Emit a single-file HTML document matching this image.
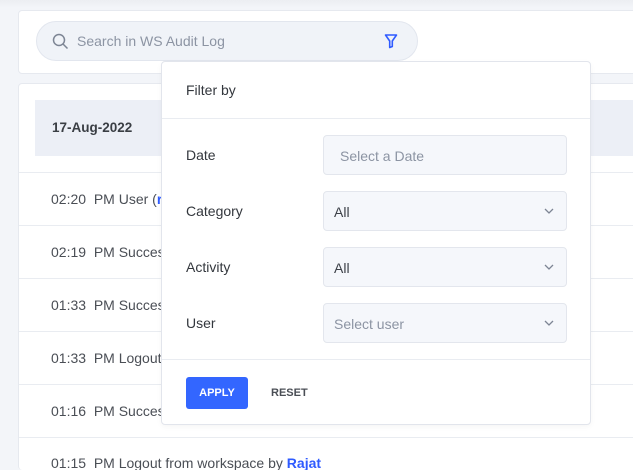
<!DOCTYPE html>
<html style="overflow:hidden;height:470px"><head><style>
*{box-sizing:border-box;margin:0;padding:0}
body{width:633px;height:470px;overflow:hidden;background:#f3f5f9;font-family:"Liberation Sans",sans-serif;position:relative;color:#3d4148}
.card{position:absolute;background:#fff;border:1px solid #e6e9ef;border-radius:4px}
.search{position:absolute;left:36px;top:21px;width:382px;height:40px;border-radius:20px;background:#f0f3f8;border:1px solid #e2e6ee}
.search span{position:absolute;left:40px;top:11px;font-size:14px;color:#8c94a3}
.hdr{position:absolute;left:35px;top:100px;width:600px;height:56px;background:#eceff6}
.hdr b{position:absolute;left:17px;top:20px;font-size:13.5px;color:#3a3e44}
.line{position:absolute;left:19px;width:614px;height:1px;background:#e9ecf1}
.row{position:absolute;left:51px;font-size:14px;color:#4a4e55;white-space:nowrap}
.row a{color:#2f5bff;font-weight:bold;text-decoration:none}
.pop{position:absolute;left:161px;top:61px;width:430px;height:364px;background:#fff;border:1px solid #e2e5ec;border-radius:4px;box-shadow:0 2px 6px rgba(0,0,0,.04)}
.pop .lbl{position:absolute;left:24px;font-size:14px;color:#33373d}
.inp{position:absolute;left:161px;width:244px;height:40px;background:#f5f7fb;border:1px solid #e3e6ed;border-radius:4px;font-size:14px}
.inp span{position:absolute;left:16px;top:12px}
.inp svg{position:absolute;right:12px;top:16px}
.sep{position:absolute;left:0;width:428px;height:1px;background:#e9ecf1}
</style></head><body>
<div style="position:absolute;left:0;top:0;width:633px;height:8px;background:linear-gradient(#eceef2,#f3f5f9)"></div>
<div class="card" style="left:18px;top:10px;width:630px;height:64px"></div>
<div class="card" style="left:18px;top:83px;width:630px;height:387px;border-bottom:none"></div>
<div class="search">
<svg style="position:absolute;left:15px;top:11px" width="17" height="17" viewBox="0 0 17 17"><circle cx="7" cy="7" r="5.5" fill="none" stroke="#7d8594" stroke-width="1.5"/><path d="M11 11l4.5 4.5" stroke="#7d8594" stroke-width="1.5"/></svg>
<span>Search in WS Audit Log</span>
<svg style="position:absolute;left:347px;top:11px" width="14" height="16" viewBox="0 0 14 16"><path d="M1.5 2h11L8.3 8v5.5L5.7 14.5V8z" fill="none" stroke="#2f5bff" stroke-width="1.6" stroke-linejoin="round"/></svg>
</div>
<div class="hdr"><b>17-Aug-2022</b></div>
<div class="line" style="top:172px"></div>
<div class="line" style="top:225px"></div>
<div class="line" style="top:278px"></div>
<div class="line" style="top:331px"></div>
<div class="line" style="top:384px"></div>
<div class="line" style="top:437px"></div>
<div class="row" style="top:191px">02:20&nbsp; PM User (<a>ra</a></div>
<div class="row" style="top:244px">02:19&nbsp; PM Success</div>
<div class="row" style="top:297px">01:33&nbsp; PM Success</div>
<div class="row" style="top:350px">01:33&nbsp; PM Logout</div>
<div class="row" style="top:403px">01:16&nbsp; PM Success</div>
<div class="row" style="top:455px">01:15&nbsp; PM Logout from workspace by <a>Rajat</a></div>
<div class="pop">
<div class="lbl" style="top:20px">Filter by</div>
<div class="sep" style="top:56px"></div>
<div class="lbl" style="top:85px">Date</div>
<div class="inp" style="top:73px"><span style="color:#8c94a3">Select a Date</span></div>
<div class="lbl" style="top:141px">Category</div>
<div class="inp" style="top:129px"><span style="left:10px">All</span><svg width="10" height="6" viewBox="0 0 10 6"><path d="M1 1l4 4 4-4" fill="none" stroke="#7d8594" stroke-width="1.3"/></svg></div>
<div class="lbl" style="top:197px">Activity</div>
<div class="inp" style="top:185px"><span style="left:10px">All</span><svg width="10" height="6" viewBox="0 0 10 6"><path d="M1 1l4 4 4-4" fill="none" stroke="#7d8594" stroke-width="1.3"/></svg></div>
<div class="lbl" style="top:253px">User</div>
<div class="inp" style="top:241px"><span style="left:10px;color:#8c94a3">Select user</span><svg width="10" height="6" viewBox="0 0 10 6"><path d="M1 1l4 4 4-4" fill="none" stroke="#7d8594" stroke-width="1.3"/></svg></div>
<div class="sep" style="top:297px"></div>
<div style="position:absolute;left:24px;top:315px;width:62px;height:32px;background:#3366ff;border-radius:3px;color:#fff;font-size:11px;font-weight:bold;text-align:center;line-height:32px">APPLY</div>
<div style="position:absolute;left:109px;top:315px;height:32px;line-height:32px;font-size:11px;font-weight:bold;color:#4a4e55">RESET</div>
</div>
</body></html>
